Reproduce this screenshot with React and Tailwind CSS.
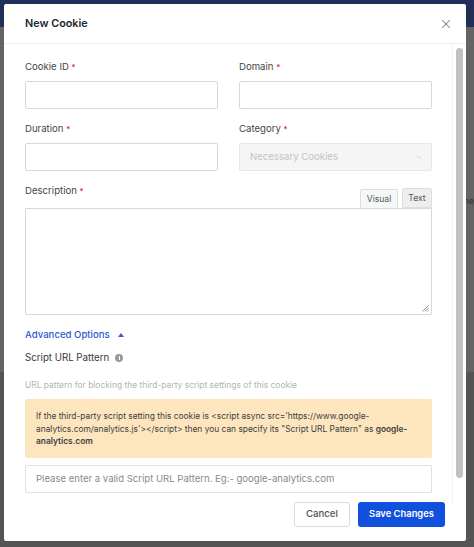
import { X, ChevronDown } from "lucide-react";

const Label = ({ text, className = "" }) => (
    <p className={`text-[9.6px] leading-[14px] text-[#3f444d] ${className}`}>
        {text} <span className="text-[8px] text-[#d0121f]">*</span>
    </p>
);

const TextBox = () => (
    <div className="mt-[7px] h-[28px] rounded-[2px] border border-[#d5d8dc] bg-white"></div>
);

const App = () => {
    return (
        <div className="relative h-[547px] w-[474px] overflow-hidden bg-[#545454] font-['Inter',sans-serif]">
            <div className="h-[27px] bg-[#1f2f58]"></div>
            <div className="flex h-[345px] flex-col items-end bg-[#646464]">
                <div className="mt-[168px] text-[9px] leading-[12px] text-[#2e2e2e]">he</div>
            </div>

            <div className="absolute left-[4px] top-[4px] flex h-[537px] w-[462px] flex-col rounded-[2px] bg-white">
                <div className="flex h-[40px] items-center justify-between border-b border-[#eeeff1] pl-[21px] pr-[13px]">
                    <h2 className="pt-[2px] text-[10.8px] font-semibold text-[#23282f]">New Cookie</h2>
                    <X size={14} strokeWidth={1.8} className="text-[#6f7f96]" />
                </div>

                <div className="flex min-h-0 flex-1">
                    <div className="w-[449px] border-r border-[#f1f1f1] pb-[9px] pl-[21px] pr-[20px] pt-[16px]">
                        <div className="grid grid-cols-2 gap-x-[21px]">
                            <div>
                                <Label text="Cookie ID" />
                                <TextBox />
                            </div>
                            <div>
                                <Label text="Domain" />
                                <TextBox />
                            </div>
                            <div className="mt-[13px]">
                                <Label text="Duration" />
                                <TextBox />
                            </div>
                            <div className="mt-[13px]">
                                <Label text="Category" />
                                <div className="mt-[7px] flex h-[28px] items-center justify-between rounded-[2px] border border-[#e6e7e9] bg-[#f5f5f5] pl-[10px] pr-[8px] text-[9.6px] text-[#c2c4c7]">
                                    <span>Necessary Cookies</span>
                                    <ChevronDown size={8} />
                                </div>
                            </div>
                        </div>

                        <div className="mt-[13px] flex items-end justify-between">
                            <Label text="Description" className="mb-[10px]" />
                            <div className="flex items-end gap-[4px]">
                                <div className="relative top-px flex h-[20px] w-[38px] items-center justify-center rounded-t-[2px] border border-b-0 border-[#dcdee0] bg-[#f6f7f7] text-[8.6px] text-[#50575e]">Visual</div>
                                <div className="flex h-[20px] w-[30px] items-center justify-center rounded-t-[2px] border border-[#dcdee0] bg-[#eeeeee] text-[8.6px] text-[#50575e]">Text</div>
                            </div>
                        </div>
                        <div className="relative h-[107px] rounded-b-[2px] border border-[#d5d8dc] bg-white">
                            <svg className="absolute bottom-[2px] right-[2px]" width="7" height="7" viewBox="0 0 7 7">
                                <path d="M0.5 6.5 L6.5 0.5 M3 6.5 L6.5 3 M5.3 6.5 L6.5 5.3" stroke="#8d8d8d" strokeWidth="1" fill="none" />
                            </svg>
                        </div>

                        <div className="mt-[13px] flex items-center gap-[8px] text-[9.6px] font-medium leading-[14px] text-[#2f58cf]">
                            Advanced Options
                            <svg width="6" height="4" viewBox="0 0 6 4"><path d="M3 0 L6 4 L0 4 Z" fill="#3a5fb8" /></svg>
                        </div>
                        <div className="mt-[9px] flex items-center gap-[6px] text-[9.7px] leading-[14px] text-[#33373d]">
                            Script URL Pattern
                            <span className="flex h-[8px] w-[8px] items-center justify-center rounded-full bg-[#9a9a9a]">
                                <span className="h-[4px] w-px bg-white"></span>
                            </span>
                        </div>
                        <p className="mt-[14px] text-[8.45px] leading-[12px] text-[#b3b4b7]">URL pattern for blocking the third-party script settings of this cookie</p>
                        <div className="mt-[8px] h-[59px] rounded-[2px] bg-[#fde5bd] px-[11px] pt-[11px] text-[8.4px] leading-[12.5px] text-[#3c3f44]">
                            If the third-party script setting this cookie is &lt;script async src='https://www.google-analytics.com/analytics.js'&gt;&lt;/script&gt; then you can specify its "Script URL Pattern" as <b className="font-semibold">google-analytics.com</b>
                        </div>
                        <div className="mt-[7px] flex h-[28px] items-center rounded-[2px] border border-[#dfe1e4] bg-white pl-[10px] text-[9.55px] text-[#87898d]">
                            Please enter a valid Script URL Pattern. Eg:- google-analytics.com
                        </div>
                    </div>
                    <div className="flex-1 pl-[3px] pt-[4px]">
                        <div className="h-[430px] w-[7px] rounded-full bg-[#c1c1c1]"></div>
                    </div>
                </div>

                <div className="flex h-[39px] shrink-0 items-start justify-end gap-[8px] pr-[21px]">
                    <button className="h-[25px] w-[56px] rounded-[3px] border border-[#d9dbde] bg-white text-[9.6px] font-medium text-[#4c5158]">Cancel</button>
                    <button className="h-[25px] w-[87px] rounded-[3px] bg-[#1150dc] text-[9.4px] font-semibold text-white">Save Changes</button>
                </div>
            </div>
        </div>
    );
};

export default App;
